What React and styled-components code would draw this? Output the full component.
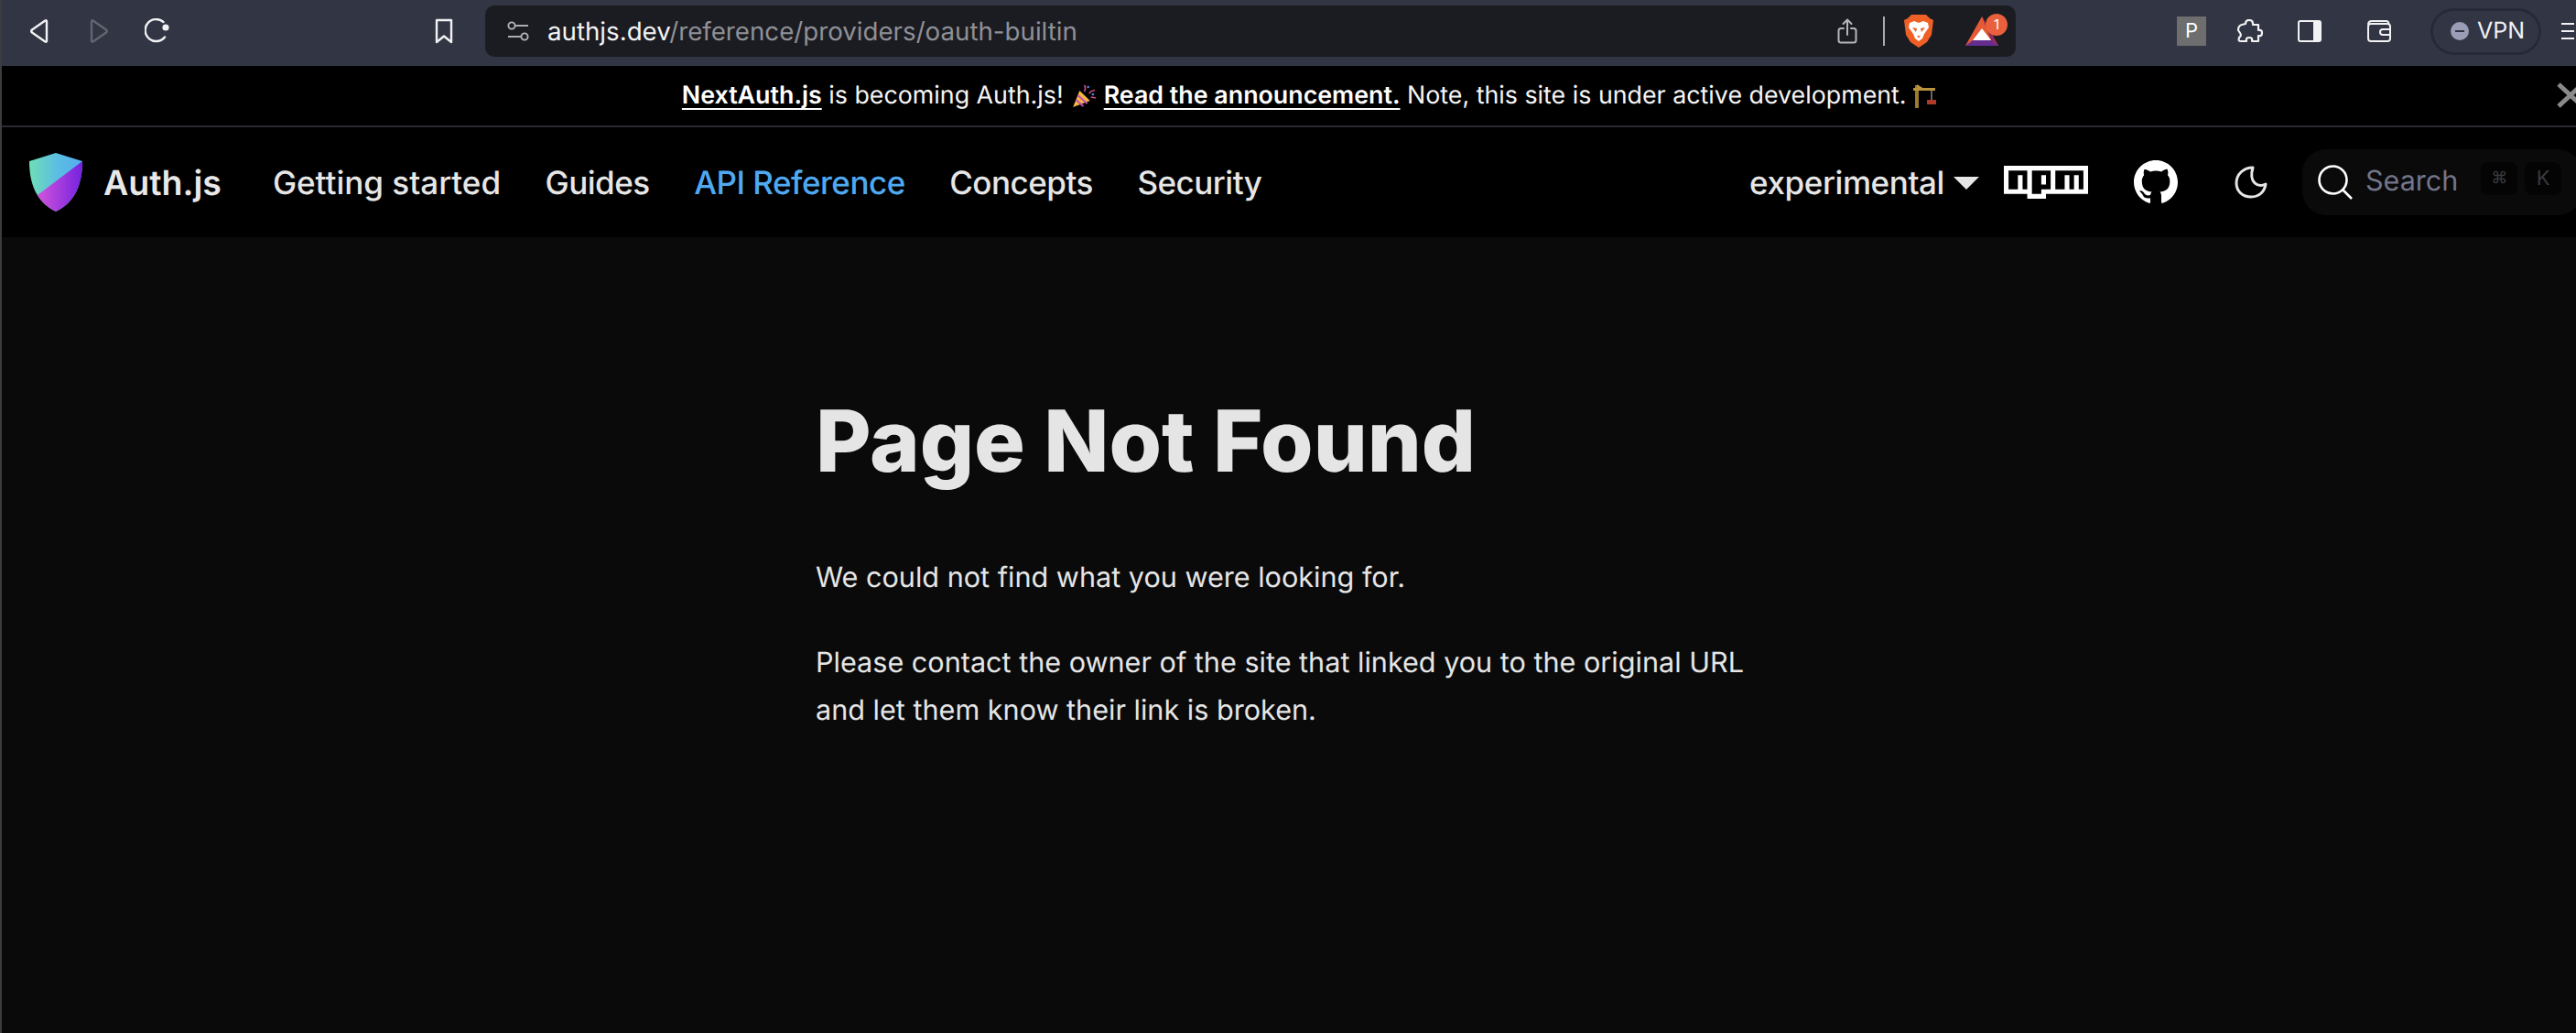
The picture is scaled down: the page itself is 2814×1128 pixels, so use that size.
import React from 'react'
import styled, { createGlobalStyle } from 'styled-components'

const GlobalStyle = createGlobalStyle`
  html, body {
    margin: 0;
    padding: 0;
    height: 100%;
    background: #0a0a0a;
    overflow: hidden;
    font-family: Inter, "Liberation Sans", sans-serif;
    text-rendering: geometricPrecision;
  }
  #root {
    height: 100%;
  }
`

const Page = styled.div`
  display: flex;
  flex-direction: column;
  box-sizing: border-box;
  width: 2814px;
  height: 1128px;
  overflow: hidden;
  border-left: 2px solid #3c3c40;
`

/* browser chrome */
const Toolbar = styled.div`
  display: flex;
  align-items: center;
  flex: 0 0 72px;
  height: 72px;
  padding-bottom: 4px;
  background: #323543;
  box-sizing: border-box;
`

const ToolIcon = styled.svg`
  display: block;
  flex: none;
  margin-left: ${props => props.$left}px;
`

const UrlBar = styled.div`
  display: flex;
  align-items: center;
  width: 1672px;
  height: 56px;
  margin-left: 35px;
  background: #1b1c22;
  border-radius: 10px;
`

const UrlText = styled.div`
  margin-left: 20px;
  font-size: 27.7px;
  color: #8f9096;
  white-space: nowrap;
  span {
    color: #f2f2f4;
  }
`

const Divider = styled.div`
  flex: none;
  width: 2px;
  height: 32px;
  margin-left: 28px;
  background: #a9aaae;
`

const Spacer = styled.div`
  flex: ${props => (props.$size ? `0 0 ${props.$size}px` : '1')};
`

const BatWrap = styled.div`
  position: relative;
  flex: none;
  width: 36px;
  height: 32px;
  margin-left: 35px;
`

const Badge = styled.div`
  position: absolute;
  top: -3px;
  left: 22px;
  width: 24px;
  height: 24px;
  border-radius: 50%;
  background: #e8603c;
  color: #fff;
  font-size: 15px;
  line-height: 24px;
  text-align: center;
`

const ExtP = styled.div`
  flex: none;
  width: 32px;
  height: 32px;
  margin-left: 176px;
  background: #6e6e6e;
  color: #fff;
  font-size: 22px;
  line-height: 32px;
  text-align: center;
`

const VpnPill = styled.div`
  display: flex;
  align-items: center;
  flex: none;
  box-sizing: border-box;
  width: 121px;
  height: 51px;
  margin-left: 43px;
  padding-left: 19px;
  border: 3px solid #272a36;
  border-radius: 26px;
  color: #f0f0f4;
  font-size: 25px;
`

const VpnDot = styled.div`
  position: relative;
  width: 20px;
  height: 20px;
  margin-right: 9px;
  border-radius: 50%;
  background: #9a9db5;
  &::after {
    content: '';
    position: absolute;
    left: 5px;
    top: 9px;
    width: 10px;
    height: 2px;
    background: #323543;
  }
`

/* announcement */
const Banner = styled.div`
  position: relative;
  flex: 0 0 67px;
  box-sizing: border-box;
  padding-left: 44px;
  background: #000;
  border-bottom: 2px solid #2a2a36;
  color: #f5f5f5;
  font-size: 26.8px;
  line-height: 65px;
  text-align: center;
  white-space: nowrap;
  a {
    color: #fff;
    font-weight: 600;
    text-decoration: underline;
    text-underline-offset: 5px;
    text-decoration-thickness: 2px;
  }
`

const Emoji = styled.svg`
  display: inline-block;
  vertical-align: -5px;
`

const CloseMark = styled.svg`
  position: absolute;
  left: 2791px;
  top: 18px;
`

/* site nav */
const Nav = styled.nav`
  display: flex;
  align-items: center;
  flex: 0 0 120px;
  background: #000;
`

const Logo = styled.svg`
  flex: none;
  margin-left: 30px;
`

const Brand = styled.div`
  margin-left: 23px;
  padding-top: 2px;
  color: #e8e8e8;
  font-size: 37.5px;
  font-weight: 600;
`

const Links = styled.div`
  display: flex;
  gap: 48.5px;
  margin-left: 56px;
  padding-top: 2px;
`

const NavLink = styled.a`
  color: ${props => (props.$active ? '#4fa9f2' : '#e6e6e6')};
  font-size: 35px;
  font-weight: 500;
  letter-spacing: ${props => props.$track ?? -0.5}px;
  white-space: nowrap;
`

const Version = styled.div`
  display: flex;
  align-items: center;
  margin-left: auto;
  padding-top: 2px;
  color: #e6e6e6;
  font-size: 35px;
  font-weight: 500;
  letter-spacing: -0.4px;
  &::after {
    content: '';
    margin-left: 10px;
    border-left: 14px solid transparent;
    border-right: 14px solid transparent;
    border-top: 14px solid #e6e6e6;
  }
`

const NavIcon = styled.svg`
  display: block;
  flex: none;
  margin-left: ${props => props.$left}px;
`

const SearchBox = styled.div`
  display: flex;
  align-items: center;
  flex: none;
  box-sizing: border-box;
  width: 305px;
  height: 72px;
  margin-left: 38px;
  margin-right: -6px;
  padding-left: 17px;
  background: #0a0a0b;
  border-radius: 26px;
`

const SearchLabel = styled.div`
  margin-left: 14px;
  margin-top: -3px;
  color: #73768a;
  font-size: 30.5px;
`

const Key = styled.div`
  flex: none;
  width: 40px;
  height: 36px;
  margin-left: ${props => props.$left}px;
  margin-top: -8px;
  background: #040404;
  border-radius: 8px;
  color: #3a3a3c;
  font-size: ${props => props.$size}px;
  line-height: 36px;
  text-align: center;
`

/* content */
const Main = styled.main`
  flex: 1;
  box-sizing: border-box;
  padding-left: 889px;
  padding-top: 168px;
  background: #0a0a0a;
  color: #e5e5e5;
`

const Heading = styled.h1`
  margin: 0;
  font-size: 93px;
  font-weight: 800;
  line-height: 1.2;
  color: #e5e5e5;
`

const Para = styled.p`
  width: 1040px;
  margin: 0;
  margin-top: ${props => props.$top}px;
  font-size: 30.6px;
  line-height: 52px;
`

const BackIcon = ({ color, flip, left }) => (
  <ToolIcon $left={left} width="22" height="28" viewBox="0 0 22 28" style={flip ? { transform: 'scaleX(-1)' } : undefined}>
    <path d="M19 3.5 L19 24.5 Q19 26.5 17 25.3 L3 15.6 Q1.4 14 3 12.4 L17 2.7 Q19 1.5 19 3.5 Z" fill="none" stroke={color} strokeWidth="2.4" strokeLinejoin="round" />
  </ToolIcon>
)

const App = () => (
  <Page>
    <GlobalStyle />
    <Toolbar>
      <BackIcon color="#f2f2f4" left={30} />
      <BackIcon color="#63656f" left={43} flip />
      <ToolIcon $left={39} width="28" height="28" viewBox="0 0 28 28">
        <path d="M22 20.5 A12 12 0 1 1 20.5 4" fill="none" stroke="#f2f2f4" strokeWidth="2.4" strokeLinecap="round" />
        <circle cx="23" cy="10" r="3.6" fill="#f2f2f4" />
      </ToolIcon>
      <ToolIcon $left={289} width="20" height="28" viewBox="0 0 20 28">
        <path d="M2 2 H18 V26 L10 19.5 L2 26 Z" fill="none" stroke="#f2f2f4" strokeWidth="2.4" strokeLinejoin="round" />
      </ToolIcon>
      <UrlBar>
        <ToolIcon $left={24} width="24" height="22" viewBox="0 0 24 22">
          <g fill="none" stroke="#b4b5b9" strokeWidth="1.9">
            <circle cx="5" cy="5" r="3.6" />
            <path d="M9 5 H23" />
            <circle cx="19" cy="17" r="3.6" />
            <path d="M1 17 H15" />
          </g>
        </ToolIcon>
        <UrlText>
          <span>authjs.dev</span>/reference/providers/oauth-builtin
        </UrlText>
        <Spacer />
        <ToolIcon $left={0} width="22" height="28" viewBox="0 0 22 28">
          <g fill="none" stroke="#b4b5b9" strokeWidth="2" strokeLinecap="round" strokeLinejoin="round">
            <path d="M7 11 H4 Q1.5 11 1.5 13.5 V24 Q1.5 26.5 4 26.5 H18 Q20.5 26.5 20.5 24 V13.5 Q20.5 11 18 11 H15" />
            <path d="M11 18 V2 M6.5 6 L11 1.5 L15.5 6" />
          </g>
        </ToolIcon>
        <Divider />
        <ToolIcon $left={21} width="32" height="36" viewBox="0 0 32 36">
          <path d="M8 0 H24 L28 4 L32 6 L30 22 L25 30 L16 36 L7 30 L2 22 L0 6 L4 4 Z" fill="#ee6026" />
          <path d="M6 9 L11 7 L16 9 L21 7 L26 9 L27 14 L22 21 L20 26 L16 29 L12 26 L10 21 L5 14 Z" fill="#fff" />
          <path d="M9 14 L14 15 L13 19 Z M23 14 L18 15 L19 19 Z M14 23 H18 L16 25.5 Z" fill="#ee6026" />
        </ToolIcon>
        <BatWrap>
          <svg width="36" height="32" viewBox="0 0 36 32" style={{ display: 'block' }}>
            <path d="M18 0 L36 32 H0 Z" fill="#e55a35" />
            <path d="M18 0 L36 32 L28 26 Z" fill="#8c2a5e" />
            <path d="M0 32 H36 L28 26 H8 Z" fill="#662d91" />
            <path d="M18 13 L28 26 H8 Z" fill="#fff" />
          </svg>
          <Badge>1</Badge>
        </BatWrap>
        <Spacer $size={19} />
      </UrlBar>
      <ExtP>P</ExtP>
      <ToolIcon $left={34} width="28" height="26" viewBox="0 0 28 26">
        <path d="M9 5 Q9 1 13 1 Q17 1 17 5 L17 6 H23 V12 Q27 11 27 15 Q27 19 23 18 V24 H16 Q17 20 13 20 Q9 20 10 24 H3 Q1 24 2 20 Q5 18 3 15 L1 12 Q1 7 5 6 Z" fill="none" stroke="#f2f2f4" strokeWidth="2.2" strokeLinejoin="round" />
      </ToolIcon>
      <ToolIcon $left={38} width="26" height="24" viewBox="0 0 26 24">
        <rect x="1" y="1" width="24" height="22" rx="2" fill="none" stroke="#f2f2f4" strokeWidth="2" />
        <rect x="17" y="1" width="8" height="22" fill="#f2f2f4" />
      </ToolIcon>
      <ToolIcon $left={50} width="26" height="24" viewBox="0 0 26 24">
        <g fill="none" stroke="#f2f2f4" strokeWidth="2" strokeLinejoin="round">
          <path d="M1 5 Q1 1 5 1 H21 Q23 1 23.5 4" />
          <rect x="1" y="4" width="24" height="19" rx="3" />
          <path d="M25 10 H17 Q14 10 14 13 Q14 16 17 16 H25" />
        </g>
      </ToolIcon>
      <VpnPill>
        <VpnDot />
        VPN
      </VpnPill>
      <ToolIcon $left={22} width="14" height="18" viewBox="0 0 14 18">
        <path d="M0 1 H14 M0 9 H14 M0 17 H14" stroke="#f2f2f4" strokeWidth="2" />
      </ToolIcon>
    </Toolbar>

    <Banner>
      <a>NextAuth.js</a> is becoming Auth.js!{' '}
      <Emoji width="29" height="26" viewBox="0 0 28 26" preserveAspectRatio="none">
        <path d="M3 25 L10 7 L21 18 Z" fill="#f4b63f" />
        <path d="M6 17 L14 24 M8 12 L18 21" stroke="#c64fb0" strokeWidth="2" />
        <path d="M15 8 Q17 4 15 1 M20 10 Q23 6 26 7 M22 14 L27 15" stroke="#d04a8a" strokeWidth="1.6" fill="none" />
        <circle cx="19" cy="3" r="1.2" fill="#4a90e2" />
        <circle cx="24" cy="11" r="1.2" fill="#4a90e2" />
      </Emoji>{' '}
      <a>Read the announcement.</a> Note, this site is under active development.{' '}
      <Emoji width="25" height="27" viewBox="0 0 25 27">
        <path d="M2 2 H6 V27 H2 Z" fill="#9c7a2e" />
        <path d="M0 5 H24 V8 H0 Z M4 1 L12 6 L4 6 Z" fill="#b8923c" />
        <path d="M20 8 V18" stroke="#888" strokeWidth="1.5" />
        <rect x="15" y="18" width="10" height="5" fill="#b03a2a" />
      </Emoji>
      <CloseMark width="30" height="28" viewBox="0 0 30 28">
        <path d="M2 2 L28 26 M28 2 L2 26" stroke="#8a8a8a" strokeWidth="5" />
      </CloseMark>
    </Banner>

    <Nav>
      <Logo width="58" height="64" viewBox="0 0 58 64">
        <defs>
          <linearGradient id="shieldTop" x1="0" y1="0" x2="1" y2="0">
            <stop offset="0" stopColor="#6fdfb6" />
            <stop offset="0.5" stopColor="#5cbfe0" />
            <stop offset="1" stopColor="#52acf2" />
          </linearGradient>
          <linearGradient id="shieldBottom" x1="0" y1="0" x2="1" y2="0">
            <stop offset="0.2" stopColor="#cc52dc" />
            <stop offset="1" stopColor="#7422de" />
          </linearGradient>
          <clipPath id="shieldClip">
            <path d="M29 0 L58 9 C58 34 50 54 29 64 C8 54 0 34 0 9 Z" />
          </clipPath>
        </defs>
        <g clipPath="url(#shieldClip)">
          <rect width="58" height="64" fill="url(#shieldTop)" />
          <path d="M58 9 L9 46 L0 64 H58 Z" fill="url(#shieldBottom)" />
        </g>
      </Logo>
      <Brand>Auth.js</Brand>
      <Links>
        <NavLink $track={0}>Getting started</NavLink>
        <NavLink>Guides</NavLink>
        <NavLink $active>API Reference</NavLink>
        <NavLink>Concepts</NavLink>
        <NavLink>Security</NavLink>
      </Links>
      <Version>experimental</Version>
      <NavIcon $left={27} width="92" height="36" viewBox="0 0 18 7" preserveAspectRatio="none">
        <path fill="#fff" fillRule="evenodd" d="M0 0h18v6H9v1H5V6H0V0z M1 1v4h2V2h1v3h1V1H1z M6 1v5h2V5h2V1H6z M8 2h1v2H8V2z M11 1v4h2V2h1v3h1V2h1v3h1V1h-6z" />
      </NavIcon>
      <NavIcon $left={50} width="48" height="48" viewBox="0 0 16 16">
        <path fill="#fff" d="M8 0C3.58 0 0 3.58 0 8c0 3.54 2.29 6.53 5.47 7.59.4.07.55-.17.55-.38 0-.19-.01-.82-.01-1.49-2.01.37-2.53-.49-2.69-.94-.09-.23-.48-.94-.82-1.13-.28-.15-.68-.52-.01-.53.63-.01 1.08.58 1.23.82.72 1.21 1.87.87 2.33.66.07-.52.28-.87.51-1.07-1.78-.2-3.64-.89-3.64-3.95 0-.87.31-1.59.82-2.15-.08-.2-.36-1.02.08-2.12 0 0 .67-.21 2.2.82.64-.18 1.32-.27 2-.27.68 0 1.36.09 2 .27 1.53-1.04 2.2-.82 2.2-.82.44 1.1.16 1.92.08 2.12.51.56.82 1.27.82 2.15 0 3.07-1.87 3.75-3.65 3.95.29.25.54.73.54 1.48 0 1.07-.01 1.93-.01 2.2 0 .21.15.46.55.38A8.013 8.013 0 0016 8c0-4.42-3.58-8-8-8z" />
      </NavIcon>
      <NavIcon $left={62} width="36" height="36" viewBox="0 0 36 36">
        <path d="M20 2 C10 2 2 9 2 19 C2 28 9 34 18 34 C27 34 33 28 34 20 C26 24 15 19 20 2 Z" fill="none" stroke="#e6e6e6" strokeWidth="3" strokeLinejoin="round" />
      </NavIcon>
      <SearchBox>
        <svg width="38" height="38" viewBox="0 0 38 38" style={{ flex: 'none' }}>
          <circle cx="16.5" cy="16.5" r="15" fill="none" stroke="#fff" strokeWidth="2.6" />
          <path d="M27 27 L37 37" stroke="#fff" strokeWidth="2.6" />
        </svg>
        <SearchLabel>Search</SearchLabel>
        <Key $left={25} $size={18}>⌘</Key>
        <Key $left={8} $size={22}>K</Key>
      </SearchBox>
    </Nav>

    <Main>
      <Heading>Page Not Found</Heading>
      <Para $top={66}>We could not find what you were looking for.</Para>
      <Para $top={41}>
        Please contact the owner of the site that linked you to the original URL and let them know their link is broken.
      </Para>
    </Main>
  </Page>
)

export default App
